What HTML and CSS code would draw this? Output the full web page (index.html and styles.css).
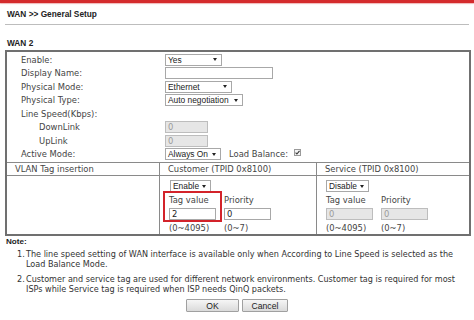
FILE: index.html
```html
<!DOCTYPE html>
<html lang="en">
<head>
    <meta charset="UTF-8">
    <title>WAN General Setup</title>
    <link rel="stylesheet" href="styles.css">
</head>
<body>
    <div class="topbar"></div>
    <div class="page">
        <h1 class="title">WAN &gt;&gt; General Setup</h1>
        <h2 class="sub">WAN 2</h2>

        <div class="panel">
            <div class="form">
                <div class="lbl">Enable:</div>
                <div class="val"><span class="sel w-yes">Yes</span></div>

                <div class="lbl">Display Name:</div>
                <div class="val"><span class="txt w-name"></span></div>

                <div class="lbl">Physical Mode:</div>
                <div class="val"><span class="sel w-eth">Ethernet</span></div>

                <div class="lbl">Physical Type:</div>
                <div class="val"><span class="sel w-auto">Auto negotiation</span></div>

                <div class="lbl">Line Speed(Kbps):</div>
                <div class="val"></div>

                <div class="lbl indent">DownLink</div>
                <div class="val"><span class="txt off w-speed">0</span></div>

                <div class="lbl indent">UpLink</div>
                <div class="val"><span class="txt off w-speed">0</span></div>

                <div class="lbl">Active Mode:</div>
                <div class="val">
                    <span class="sel w-always">Always On</span>
                    <span class="lb">Load Balance:</span>
                    <svg class="chk" width="7" height="7" viewBox="0 0 7 7">
                        <rect x="0.5" y="0.5" width="6" height="6" fill="#f4f4f4" stroke="#9a9a9a"/>
                        <path d="M1.6 3.6 L2.9 5 L5.5 1.8" fill="none" stroke="#333" stroke-width="1.1"/>
                    </svg>
                </div>
            </div>

            <div class="vlan">
                <div class="vh">VLAN Tag insertion</div>
                <div class="vh">Customer (TPID 0x8100)</div>
                <div class="vh">Service (TPID 0x8100)</div>

                <div class="vc"></div>
                <div class="vc tagcell">
                    <span class="sel w-enable">Enable</span>
                    <div class="tags">
                        <div class="tl">Tag value</div>
                        <div class="tl">Priority</div>
                        <span class="txt w-tag">2</span>
                        <span class="txt w-tag">0</span>
                        <div class="tl">(0~4095)</div>
                        <div class="tl">(0~7)</div>
                    </div>
                    <div class="mark"></div>
                </div>
                <div class="vc tagcell">
                    <span class="sel w-disable">Disable</span>
                    <div class="tags">
                        <div class="tl">Tag value</div>
                        <div class="tl">Priority</div>
                        <span class="txt off w-tag">0</span>
                        <span class="txt off w-tag">0</span>
                        <div class="tl">(0~4095)</div>
                        <div class="tl">(0~7)</div>
                    </div>
                </div>
            </div>
        </div>

        <div class="note">
            <div class="note-head">Note:</div>
            <ol class="note-list">
                <li><span class="num">1.</span><span>The line speed setting of WAN interface is available only when According to Line Speed is selected as the Load Balance Mode.</span></li>
                <li><span class="num">2.</span><span>Customer and service tag are used for different network environments. Customer tag is required for most ISPs while Service tag is required when ISP needs QinQ packets.</span></li>
            </ol>
        </div>

        <div class="actions">
            <button class="btn btn-ok">OK</button>
            <button class="btn btn-cancel">Cancel</button>
        </div>
    </div>
</body>
</html>
```

FILE: styles.css
```css
body {
    margin: 0;
    background-color: #ffffff;
    font-family: "DejaVu Sans", Verdana, sans-serif;
    font-size: 8.4px;
    color: #444;
}

.topbar {
    height: 3px;
    background-color: #d42a2c;
    box-shadow: 0 1px 1px rgba(212, 42, 44, 0.35);
}

.page {
    padding: 0 3px 0 5px;
}

.title {
    margin: 0 2px 0 0;
    padding: 2px 0 0 2px;
    height: 19px;
    line-height: 19px;
    font-family: "Liberation Sans", Arial, sans-serif;
    font-size: 8.3px;
    font-weight: bold;
    color: #222;
    border-bottom: 1px solid #bdbdbd;
}

.sub {
    margin: 12px 0 1px 0;
    padding-left: 2px;
    line-height: 12px;
    font-family: "Liberation Sans", Arial, sans-serif;
    font-size: 8.3px;
    font-weight: bold;
    color: #222;
}

.panel {
    border: 2px solid #707070;
}

/* top form */
.form {
    display: grid;
    grid-template-columns: 158px 1fr;
    grid-auto-rows: 13.5px;
    align-items: center;
    padding: 1px 0;
}

.lbl {
    padding-left: 14px;
    white-space: nowrap;
}

.lbl.indent {
    padding-left: 32px;
}

.val {
    display: flex;
    align-items: center;
    height: 100%;
}

.sel {
    position: relative;
    display: inline-block;
    box-sizing: border-box;
    height: 12px;
    line-height: 10px;
    padding-left: 2px;
    border: 1px solid #a8a8a8;
    background-color: #fff;
    font-family: "Liberation Sans", Arial, sans-serif;
    font-size: 8.4px;
    color: #222;
}

.sel::after {
    content: "";
    position: absolute;
    right: 4px;
    top: 3.5px;
    border-left: 2px solid transparent;
    border-right: 2px solid transparent;
    border-top: 3px solid #222;
}

.txt {
    display: inline-block;
    box-sizing: border-box;
    height: 12px;
    line-height: 10px;
    padding-left: 2px;
    border: 1px solid #a8a8a8;
    background-color: #fff;
    color: #222;
}

.txt.off {
    background-color: #e6e6e6;
    border-color: #bdbdbd;
    color: #9a9a9a;
}

.w-yes { width: 57px; }
.w-name { width: 108px; }
.w-eth { width: 67px; }
.w-auto { width: 78px; }
.w-speed { width: 43px; }
.w-always { width: 56px; }
.w-enable { width: 41px; margin-left: 1px; }
.w-disable { width: 43px; }
.w-tag { width: 47px; }

.lb {
    margin-left: 8px;
}

.chk {
    margin-left: 6px;
    margin-top: -3px;
}

/* vlan table */
.vlan {
    display: grid;
    grid-template-columns: 153px 157px 1fr;
    border-top: 1px solid #8a8a8a;
}

.vh {
    height: 12px;
    line-height: 12px;
    padding-left: 8px;
    border-bottom: 1px solid #8a8a8a;
    border-right: 1px solid #8a8a8a;
    white-space: nowrap;
}

.vc {
    height: 58px;
    box-sizing: border-box;
    border-right: 1px solid #8a8a8a;
}

.vh:nth-child(3),
.vc:last-child {
    border-right: none;
}

.tagcell {
    position: relative;
    padding: 4px 0 0 9px;
}

.tags {
    display: grid;
    grid-template-columns: 47px 47px;
    column-gap: 8px;
    row-gap: 2px;
    margin-top: 2px;
}

.tl {
    line-height: 12px;
    white-space: nowrap;
}

.mark {
    position: absolute;
    left: 3px;
    top: 15px;
    width: 59px;
    height: 31px;
    box-sizing: border-box;
    border: 2px solid #d3232a;
}

/* notes */
.note {
    font-size: 8.1px;
    color: #333;
    margin-top: 1px;
}

.note-head {
    padding-left: 1px;
    line-height: 10px;
    font-family: "Liberation Sans", Arial, sans-serif;
    font-weight: bold;
    color: #222;
}

.note-list {
    list-style: none;
    margin: 2px 0 0 0;
    padding: 0 0 0 12px;
}

.note-list li {
    display: flex;
    line-height: 10px;
    margin-bottom: 5px;
    padding-right: 10px;
}

.note-list .num {
    flex: none;
    width: 9px;
}

.actions {
    display: flex;
    justify-content: center;
    gap: 3px;
    margin-top: 2px;
    padding-right: 2px;
}

.btn {
    height: 13px;
    padding: 0;
    border: 1px solid #a0a0a0;
    border-radius: 1px;
    background: linear-gradient(#f6f6f6, #dadada);
    font-family: "Liberation Sans", Arial, sans-serif;
    font-size: 8.6px;
    color: #222;
}

.btn-ok { width: 53px; }
.btn-cancel { width: 46px; }
```
